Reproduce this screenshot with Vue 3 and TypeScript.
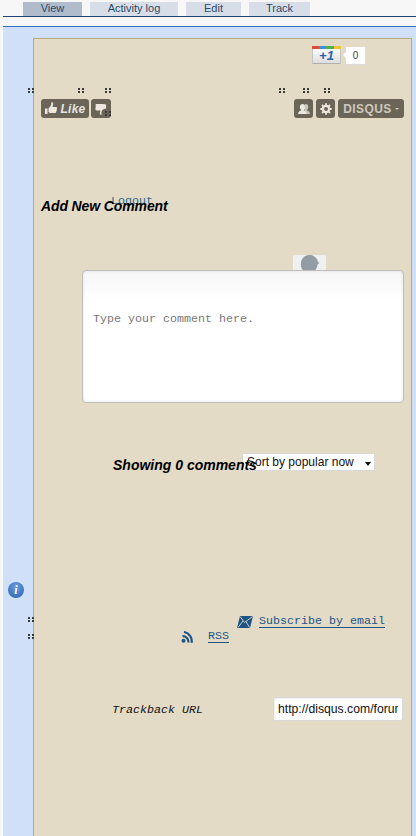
<template>
  <div class="page">
    <nav class="tabs">
      <a v-for="tab in tabs" :key="tab.label" class="tab" :class="{ active: tab.active }" :style="{ width: tab.width + 'px' }">{{ tab.label }}</a>
    </nav>
    <div class="gap"></div>

    <main class="main">
      <span class="info-icon">i</span>

      <section class="panel">
        <!-- drag handles -->
        <span
          v-for="(h, i) in handles"
          :key="i"
          class="handle"
          :style="{ left: h.x + 'px', top: h.y + 'px' }"
        ></span>

        <div class="gplus">
          <div class="plus-btn"><b>+1</b></div>
          <div class="plus-count">0</div>
        </div>

        <div class="actions">
          <div class="btn-group">
            <button class="dq-btn like">
              <svg width="12" height="13" viewBox="0 0 12 13"><path d="M0 6.500h2.500V12H0zM3.500 6.500 6 3.500 6.500 0C8 0 8.500 1.500 8 3L7.500 5H11c1 0 1.200 1 .8 1.500.3.500.2 1-.2 1.400.2.500.1 1-.3 1.300.1.600 0 1.300-.8 1.800H6c-1.200 0-2-.5-2.500-1z" fill="#ece8df"/></svg>
              <span>Like</span>
            </button>
            <button class="dq-btn dislike">
              <svg width="12" height="12" viewBox="0 0 13 13"><path d="M.8 1H8.500l3.500.5V6L8.500 7 7 9.500 7 13C5.500 13 5 11.500 5.300 10L6 8H1.500C.5 8 .2 7 .6 6.500.2 6 .3 5.500.7 5.100.4 4.600.5 4 .9 3.700.6 3 .6 1.800.8 1z" fill="#ece8df"/></svg>
            </button>
          </div>
          <div class="btn-group right">
            <button class="dq-btn square">
              <svg width="12" height="10" viewBox="0 0 12 10"><path d="M7.500 0a2.800 2.800 0 0 1 2.800 3c0 1.300-.6 2.300-1.300 2.800v.7c1 .4 3 1 3 3.500H8.500c0-1.500-1-2.700-2-3.300V2C6.500 1 6.800.3 7.500 0z" fill="#c9c4b8"/><path d="M4.500 0C6 0 7.200 1.300 7.200 3c0 1.300-.6 2.300-1.300 2.800v.7c1.200.4 3 1 3 3.500H0c0-2.500 2-3.100 3.100-3.500v-.7C2.400 5.300 1.800 4.300 1.800 3 1.800 1.300 3 0 4.500 0z" fill="#ece8df"/></svg>
            </button>
            <button class="dq-btn square">
              <svg width="12" height="12" viewBox="0 0 12 12"><circle cx="6" cy="6" r="3.100" fill="none" stroke="#ece8df" stroke-width="2.200"/><path d="M6 .3v2.500M6 9.200v2.500M.3 6h2.500M9.200 6h2.500M2 2l1.800 1.800M8.200 8.200 10 10M10 2 8.200 3.800M3.800 8.200 2 10" stroke="#ece8df" stroke-width="1.800"/></svg>
            </button>
            <button class="dq-btn brand">DISQUS<i class="caret"></i></button>
          </div>
        </div>

        <div class="heading-row">
          <a class="logout">Logout</a>
          <h2 class="heading">Add New Comment</h2>
        </div>

        <div class="comment">
          <div class="avatar">
            <svg width="20" height="15" viewBox="0 0 20 15"><path d="M1 10a8.500 8.500 0 0 1 17-3l1.500 1-2 1.500c-.5 3-1 4-2 5.500H3C1.500 13.500 1 12.500 1 10z" fill="#939ca3"/></svg>
          </div>
          <textarea class="comment-box" placeholder="Type your comment here."></textarea>
        </div>

        <div class="sort-row">
          <h3 class="count">Showing 0 comments</h3>
          <div class="sort-wrap">
            <select class="sort">
              <option>Sort by popular now</option>
            </select>
          </div>
        </div>

        <div class="link-row subscribe">
          <svg width="16" height="12" viewBox="0 0 16 12"><path d="M3 0h13l-3 12H0z" fill="#1d5485"/><path d="M3 .5l4.500 6L15.500.5M1 11.500l5-6.500M12.500 11.500 9 5.500" fill="none" stroke="#e3dbc6" stroke-width=".9"/></svg>
          <a>Subscribe by email</a>
        </div>
        <div class="link-row rss">
          <svg width="12" height="12" viewBox="0 0 12 12"><circle cx="2.500" cy="9.800" r="2" fill="#1d5485"/><path d="M1.500 5.200a5.500 5.500 0 0 1 5.800 6.300M3 1a9 9 0 0 1 7.500 10.800" fill="none" stroke="#1d5485" stroke-width="2.200"/></svg>
          <a>RSS</a>
        </div>

        <div class="trackback">
          <label>Trackback URL</label>
          <input class="url" value="http://disqus.com/forums/example/trackback" readonly />
        </div>
      </section>
    </main>
  </div>
</template>

<script setup lang="ts">
const tabs = [
  { label: 'View', width: 59, active: true },
  { label: 'Activity log', width: 88, active: false },
  { label: 'Edit', width: 55, active: false },
  { label: 'Track', width: 61, active: false },
]

// positions relative to the panel
const handles = [
  { x: -6, y: 49 },
  { x: 44, y: 49 },
  { x: 71, y: 49 },
  { x: 245, y: 49 },
  { x: 269, y: 49 },
  { x: 290, y: 49 },
  { x: 71, y: 72 },
  { x: -6, y: 578 },
  { x: -6, y: 595 },
]
</script>

<style>
html,
body {
  background: #f7f7f7;
}
</style>

<style scoped>
.page {
  height: 836px;
  overflow: hidden;
  font-family: "Liberation Sans", Arial, sans-serif;
  background: #f7f7f7;
}

.tabs {
  display: flex;
  gap: 8px;
  height: 14px;
  margin-left: 3px;
  padding: 2px 0 0 20px;
  border-bottom: 1px solid #1f4470;
}

.tab {
  display: block;
  height: 14px;
  background: #d8dee8;
  color: #2a4a6a;
  font-size: 11px;
  line-height: 13px;
  text-align: center;
}

.tab.active {
  background: #b0bccc;
}

.gap {
  height: 9px;
}

.main {
  position: relative;
  margin-left: 3px;
  height: 810px;
  box-sizing: border-box;
  padding: 11px 4px 0 30px;
  background: #cfe0f8;
  border-top: 1px solid #2f6fc4;
}

.info-icon {
  position: absolute;
  left: 5px;
  top: 555px;
  width: 16px;
  height: 16px;
  border-radius: 50%;
  background: radial-gradient(circle at 50% 30%, #6a9bdc, #2a62ae);
  color: #fff;
  font: italic bold 12px/16px "Liberation Serif", serif;
  text-align: center;
}

.panel {
  position: relative;
  box-sizing: border-box;
  height: 810px;
  border: 1px solid #b9aa82;
  background: #e3dbc6;
}

.handle {
  position: absolute;
  z-index: 3;
  width: 6px;
  height: 5px;
  background:
    linear-gradient(#3a3a3a, #3a3a3a) 0 0 / 2px 2px no-repeat,
    linear-gradient(#3a3a3a, #3a3a3a) 4px 0 / 2px 2px no-repeat,
    linear-gradient(#3a3a3a, #3a3a3a) 0 3px / 2px 2px no-repeat,
    linear-gradient(#3a3a3a, #3a3a3a) 4px 3px / 2px 2px no-repeat;
}

.gplus {
  display: flex;
  justify-content: flex-end;
  gap: 5px;
  height: 18px;
  margin-top: 7px;
  padding-right: 46px;
}

.plus-btn {
  box-sizing: border-box;
  width: 29px;
  height: 18px;
  border-top: 3px solid;
  border-image: linear-gradient(90deg, #dd4b39 0 25%, #3f8ee0 25% 50%, #4fb04f 50% 75%, #f2c433 75%) 3 0 0 0;
  background: linear-gradient(#fbfbfb, #dcdcdc);
  box-shadow: inset 1px 0 #c4c4c4, inset -1px 0 #c4c4c4, inset 0 -1px #b0b0b0;
  color: #2a62a8;
  font-size: 13px;
  font-style: italic;
  line-height: 14px;
  text-align: center;
}

.plus-count {
  position: relative;
  box-sizing: border-box;
  width: 19px;
  height: 17px;
  margin-top: 1px;
  background: #fff;
  box-shadow: 1px 1px 0 #dcdcdc;
  color: #444;
  font-size: 10px;
  line-height: 17px;
  text-align: center;
}

.plus-count::before {
  content: "";
  position: absolute;
  left: -3px;
  top: 5px;
  border: 3px solid transparent;
  border-left: 0;
  border-right-color: #fff;
}

.actions {
  display: flex;
  justify-content: space-between;
  margin-top: 35px;
  padding: 0 7px;
}

.btn-group {
  display: flex;
  gap: 2px;
}

.btn-group.right {
  gap: 3px;
}

.dq-btn {
  display: flex;
  align-items: center;
  justify-content: center;
  height: 19px;
  padding: 0;
  border: 0;
  border-radius: 3px;
  background: #6b6557;
  color: #e4e4e2;
  font-family: "Liberation Sans", Arial, sans-serif;
}

.like {
  width: 48px;
  gap: 4px;
  font-size: 12px;
  font-style: italic;
  font-weight: bold;
  letter-spacing: 0.2px;
}

.dislike {
  width: 20px;
}

.square {
  width: 19px;
}

.brand {
  width: 66px;
  gap: 3px;
  color: #cdc9be;
  font-size: 12px;
  font-weight: bold;
  letter-spacing: 0.4px;
}

.caret {
  width: 0;
  height: 0;
  margin-top: 1px;
  border: 2px solid transparent;
  border-top-color: #cdc9be;
  border-bottom: 0;
}

.heading-row {
  position: relative;
  margin-top: 80px;
  padding-left: 7px;
}

.logout {
  position: absolute;
  left: 77px;
  top: -4px;
  color: #2f6a8f;
  font-family: "Liberation Mono", "Courier New", monospace;
  font-size: 11.67px;
}

.heading {
  position: relative;
  margin: 0;
  color: #000;
  font-size: 14px;
  font-style: italic;
  font-weight: bold;
  letter-spacing: -0.12px;
  line-height: 16px;
}

.comment {
  display: flex;
  flex-direction: column;
  margin-top: 41px;
  padding: 0 7px 0 48px;
}

.avatar {
  display: flex;
  justify-content: center;
  width: 33px;
  height: 15px;
  margin-left: 211px;
  overflow: hidden;
  border-radius: 2px 2px 0 0;
  background: #eef0f1;
}

.comment-box {
  display: block;
  box-sizing: border-box;
  width: 100%;
  height: 133px;
  padding: 41px 10px 0;
  border: 1px solid #bdbdbd;
  border-radius: 4px;
  outline: none;
  overflow: hidden;
  resize: none;
  background: linear-gradient(#f5f5f5, #fff 30px);
  font-family: "Liberation Mono", "Courier New", monospace;
  font-size: 11.67px;
  line-height: 14px;
  box-shadow: inset 0 0 3px #e2e2e2;
}

.comment-box::placeholder {
  color: #777;
  opacity: 1;
}

.sort-row {
  display: flex;
  margin-top: 50px;
  padding-left: 79px;
}

.count {
  position: relative;
  z-index: 1;
  width: 129px;
  margin: 4px 0 0;
  color: #000;
  font-size: 14px;
  font-style: italic;
  font-weight: bold;
  line-height: 16px;
  white-space: nowrap;
}

.sort-wrap {
  position: relative;
  width: 133px;
  height: 18px;
}

.sort-wrap::after {
  content: "";
  position: absolute;
  right: 4px;
  top: 9px;
  border: 3.500px solid transparent;
  border-top: 4px solid #111;
  border-bottom: 0;
}

.sort {
  box-sizing: border-box;
  display: block;
  width: 100%;
  height: 18px;
  padding: 0 0 0 4px;
  border: 1px solid #d8d8d8;
  border-radius: 0;
  outline: none;
  appearance: none;
  background: #fff;
  color: #111;
  font-family: "Liberation Sans", Arial, sans-serif;
  font-size: 12px;
}

.link-row {
  display: flex;
  align-items: center;
  font-family: "Liberation Mono", "Courier New", monospace;
  font-size: 11.67px;
}

.link-row a {
  border-bottom: 1px solid #1d5485;
  color: #1d5485;
  line-height: 11px;
}

.subscribe {
  justify-content: flex-end;
  gap: 6px;
  margin-top: 143px;
  padding-right: 26px;
}

.rss {
  gap: 15px;
  margin-top: 3px;
  padding-left: 147px;
}

.trackback {
  display: flex;
  align-items: center;
  margin-top: 54px;
  padding-left: 78px;
}

.trackback label {
  width: 161px;
  margin-top: 2px;
  color: #111;
  font-family: "Liberation Mono", "Courier New", monospace;
  font-size: 11.67px;
  font-style: italic;
}

.url {
  box-sizing: border-box;
  width: 130px;
  height: 24px;
  padding: 0 4px;
  border: 1px solid #d8d8d8;
  border-radius: 2px;
  outline: none;
  background: #fff;
  color: #111;
  font-family: "Liberation Sans", Arial, sans-serif;
  font-size: 12.2px;
  box-shadow: inset 1px 1px 2px #eee;
}
</style>
